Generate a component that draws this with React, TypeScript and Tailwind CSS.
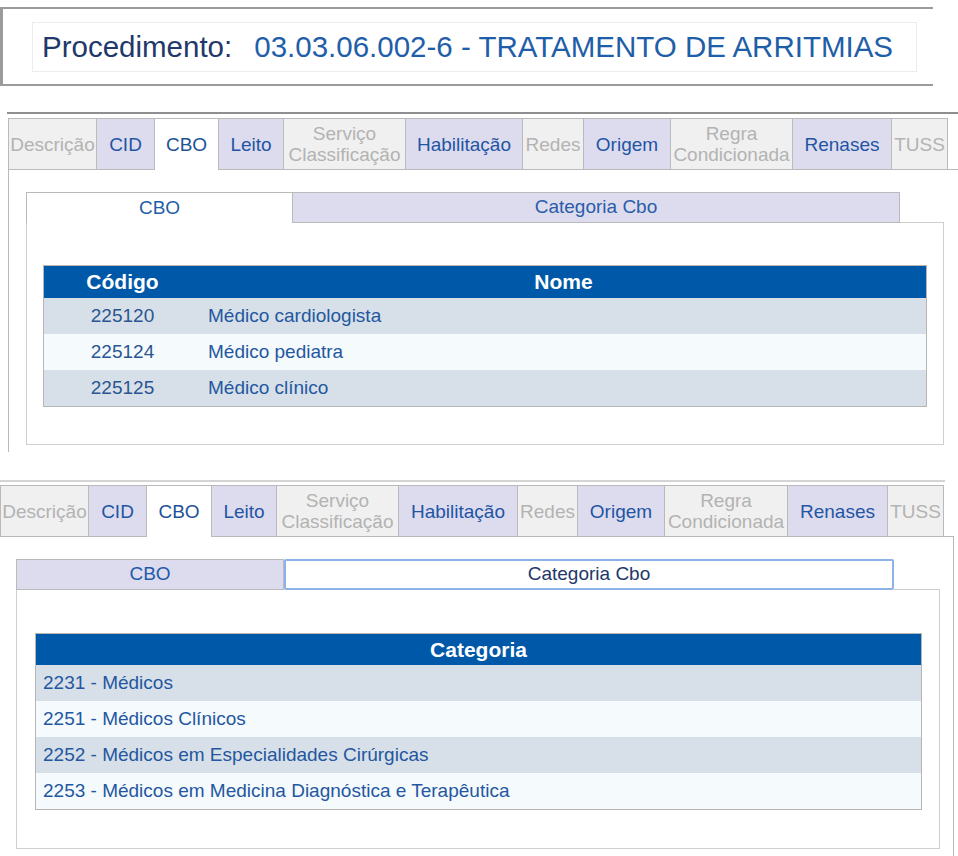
import React from 'react';

type TabKind = 'off' | 'on' | 'active';

type Tab = {
  lines: string[];
  w: string;
  kind: TabKind;
};

const tabsTop: Tab[] = [
  { lines: ['Descrição'], w: 'w-[89px]', kind: 'off' },
  { lines: ['CID'], w: 'w-[58px]', kind: 'on' },
  { lines: ['CBO'], w: 'w-[64px]', kind: 'active' },
  { lines: ['Leito'], w: 'w-[65px]', kind: 'on' },
  { lines: ['Serviço', 'Classificação'], w: 'w-[122px]', kind: 'off' },
  { lines: ['Habilitação'], w: 'w-[117px]', kind: 'on' },
  { lines: ['Redes'], w: 'w-[61px]', kind: 'off' },
  { lines: ['Origem'], w: 'w-[87px]', kind: 'on' },
  { lines: ['Regra', 'Condicionada'], w: 'w-[122px]', kind: 'off' },
  { lines: ['Renases'], w: 'w-[99px]', kind: 'on' },
  { lines: ['TUSS'], w: 'w-[56px]', kind: 'off' },
];

const tabsBottom: Tab[] = [
  { lines: ['Descrição'], w: 'w-[89px]', kind: 'off' },
  { lines: ['CID'], w: 'w-[58px]', kind: 'on' },
  { lines: ['CBO'], w: 'w-[65px]', kind: 'active' },
  { lines: ['Leito'], w: 'w-[65px]', kind: 'on' },
  { lines: ['Serviço', 'Classificação'], w: 'w-[122px]', kind: 'off' },
  { lines: ['Habilitação'], w: 'w-[119px]', kind: 'on' },
  { lines: ['Redes'], w: 'w-[60px]', kind: 'off' },
  { lines: ['Origem'], w: 'w-[87px]', kind: 'on' },
  { lines: ['Regra', 'Condicionada'], w: 'w-[123px]', kind: 'off' },
  { lines: ['Renases'], w: 'w-[100px]', kind: 'on' },
  { lines: ['TUSS'], w: 'w-[56px]', kind: 'off' },
];

const cbos = [
  { code: '225120', name: 'Médico cardiologista' },
  { code: '225124', name: 'Médico pediatra' },
  { code: '225125', name: 'Médico clínico' },
];

const categorias = [
  '2231 - Médicos',
  '2251 - Médicos Clínicos',
  '2252 - Médicos em Especialidades Cirúrgicas',
  '2253 - Médicos em Medicina Diagnóstica e Terapêutica',
];

const kindClass: Record<TabKind, string> = {
  off: 'bg-[#f0f0f0] text-[#b3b3b3] border-b',
  on: 'bg-[#dddcef] text-[#1f55a3] border-b',
  active: 'bg-white text-[#1d5296]',
};

const TabRow: React.FC<{ tabs: Tab[] }> = ({ tabs }) => (
  <div className="flex h-[52px]">
    {tabs.map((t, i) => (
      <div
        key={i}
        className={`${t.w} ${kindClass[t.kind]} ${i === 0 ? 'border-l' : ''} border-t border-r border-[#bababa] flex flex-col items-center justify-center leading-[21px] text-[19px]`}
      >
        {t.lines.map((l) => (
          <span key={l}>{l}</span>
        ))}
      </div>
    ))}
    <div className="flex-1 border-b border-[#bababa]" />
  </div>
);

const TableRows: React.FC<{ children: React.ReactNode[] }> = ({ children }) => (
  <>
    {children.map((c, i) => (
      <div
        key={i}
        className={`h-[36px] flex items-center text-[19px] text-[#24579f] ${i % 2 === 0 ? 'bg-[#d7e0e8]' : 'bg-[#f5fafd]'}`}
      >
        {c}
      </div>
    ))}
  </>
);

export default function App() {
  return (
    <div className="w-[958px] h-[856px] overflow-hidden bg-white font-['Liberation_Sans',Arial,sans-serif]">
      {/* Procedimento header */}
      <div className="w-[933px] mt-[7px] border-t-2 border-l-[3px] border-b-2 border-[#9b9b9b] pt-[13px] pb-[12px] pl-[29px]">
        <div className="w-[885px] h-[50px] border border-[#ececec] flex items-center pl-[9px] text-[29.5px] whitespace-nowrap">
          <span className="text-[#22386a]">Procedimento:</span>
          <span className="ml-[22px] text-[#1f5ea8]">03.03.06.002-6 - TRATAMENTO DE ARRITMIAS</span>
        </div>
      </div>

      {/* Screen 1 - CBO */}
      <div className="ml-[7px] mt-[26px] w-[951px] h-[2px] bg-[#8f8f8f]" />
      <div className="ml-[8px] mt-[4px] w-[950px]">
        <TabRow tabs={tabsTop} />
        <div className="h-[282px] border-l border-[#bababa] pt-[22px] pl-[17px]">
          <div className="w-[918px]">
            <div className="flex h-[31px] text-[19px]">
              <div className="w-[267px] bg-white border-t border-l border-r border-[#bababa] flex items-center justify-center text-[#1f5ea8]">
                CBO
              </div>
              <div className="w-[607px] bg-[#dddcef] border-t border-r border-b border-[#bababa] flex items-center justify-center text-[#2a5ca8]">
                Categoria Cbo
              </div>
              <div className="flex-1 border-b border-[#cfcfcf]" />
            </div>
            <div className="h-[222px] border-l border-r border-b border-[#cfcfcf] pt-[42px] px-[16px]">
              <div className="border border-[#b5b5b5]">
                <div className="h-[32px] bg-[#0059a8] grid grid-cols-[157px_1fr] items-center text-white font-bold text-[21px]">
                  <div className="text-center">Código</div>
                  <div className="text-center">Nome</div>
                </div>
                <TableRows>
                  {cbos.map((r) => (
                    <div key={r.code} className="grid grid-cols-[157px_1fr] w-full">
                      <div className="text-center text-[#2a5592]">{r.code}</div>
                      <div className="pl-[7px]">{r.name}</div>
                    </div>
                  ))}
                </TableRows>
              </div>
            </div>
          </div>
        </div>
      </div>

      {/* Screen 2 - Categoria Cbo */}
      <div className="mt-[28px] w-[945px] h-[2px] bg-[#d4d4d4]" />
      <div className="mt-[3px] w-[954px]">
        <TabRow tabs={tabsBottom} />
        <div className="h-[330px] border-r border-[#bababa] pt-[22px] pl-[16px]">
          <div className="w-[924px]">
            <div className="flex h-[31px] text-[19px]">
              <div className="w-[268px] bg-[#dddcef] border-t border-l border-r border-b border-[#bababa] flex items-center justify-center text-[#1f5aa8]">
                CBO
              </div>
              <div className="w-[610px] bg-white border-2 border-[#8db2ea] rounded-[2px] flex items-center justify-center text-[#22386a]">
                Categoria Cbo
              </div>
              <div className="flex-1 border-b border-[#cfcfcf]" />
            </div>
            <div className="h-[259px] border-l border-r border-b border-[#cfcfcf] pt-[43px] pl-[18px] pr-[17px]">
              <div className="border border-[#b5b5b5]">
                <div className="h-[31px] bg-[#0059a8] flex items-center justify-center text-white font-bold text-[21px]">
                  Categoria
                </div>
                <TableRows>
                  {categorias.map((c) => (
                    <div key={c} className="pl-[7px]">
                      {c}
                    </div>
                  ))}
                </TableRows>
              </div>
            </div>
          </div>
        </div>
      </div>
    </div>
  );
}
